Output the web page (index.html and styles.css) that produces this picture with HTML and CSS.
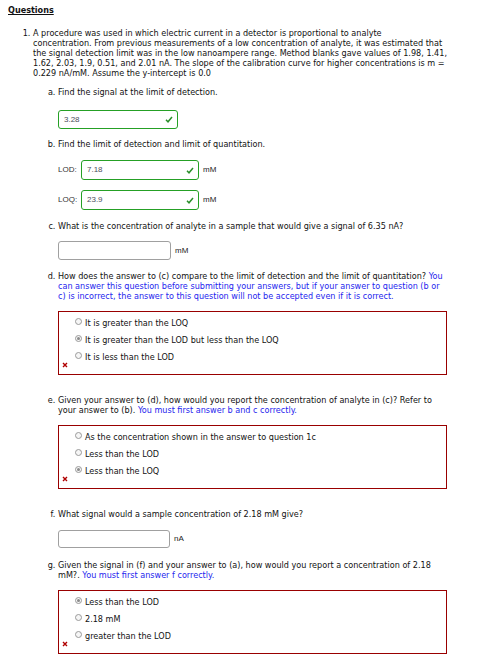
FILE: index.html
```html
<!DOCTYPE html>
<html>
<head>
<meta charset="utf-8">
<link rel="stylesheet" href="styles.css">
</head>
<body>
<div class="page">
  <h2 class="title">Questions</h2>
  <ol class="questions">
    <li>
      <p class="stem">A procedure was used in which electric current in a detector is proportional to analyte<br>concentration. From previous measurements of a low concentration of analyte, it was estimated that the signal detection limit was in the low nanoampere range. Method blanks gave values of 1.98, 1.41, 1.62, 2.03, 1.9, 0.51, and 2.01 nA. The slope of the calibration curve for higher concentrations is m = 0.229 nA/mM. Assume the y-intercept is 0.0</p>
      <ol class="parts">
        <li class="part">
          <p>Find the signal at the limit of detection.</p>
          <div class="answer answer-first">
            <span class="field ok w-a"><span class="val">3.28</span><svg class="check" width="8" height="7" viewBox="0 0 8 7"><path d="M1 3.8 L3 5.8 L7 1" fill="none" stroke="#2a8f2a" stroke-width="1.5"/></svg></span>
          </div>
        </li>
        <li class="part">
          <p>Find the limit of detection and limit of quantitation.</p>
          <div class="answer rows">
            <div class="row"><span class="label">LOD:</span><span class="field ok w-b"><span class="val">7.18</span><svg class="check" width="8" height="7" viewBox="0 0 8 7"><path d="M1 3.8 L3 5.8 L7 1" fill="none" stroke="#2a8f2a" stroke-width="1.5"/></svg></span><span class="unit">mM</span></div>
            <div class="row"><span class="label">LOQ:</span><span class="field ok w-b"><span class="val">23.9</span><svg class="check" width="8" height="7" viewBox="0 0 8 7"><path d="M1 3.8 L3 5.8 L7 1" fill="none" stroke="#2a8f2a" stroke-width="1.5"/></svg></span><span class="unit">mM</span></div>
          </div>
        </li>
        <li class="part">
          <p>What is the concentration of analyte in a sample that would give a signal of 6.35 nA?</p>
          <div class="answer row"><span class="field w-c"></span><span class="unit">mM</span></div>
        </li>
        <li class="part">
          <p>How does the answer to (c) compare to the limit of detection and the limit of quantitation? <span class="note">You can answer this question before submitting your answers, but if your answer to question (b or c) is incorrect, the answer to this question will not be accepted even if it is correct.</span></p>
          <div class="answer choices">
            <div class="opt"><span class="radio"></span>It is greater than the LOQ</div>
            <div class="opt"><span class="radio on"></span>It is greater than the LOD but less than the LOQ</div>
            <div class="opt"><span class="radio"></span>It is less than the LOD</div>
            <svg class="xmark" width="6" height="6" viewBox="0 0 6 6"><path d="M1 1 L5 5 M5 1 L1 5" stroke="#b00000" stroke-width="1.4"/></svg>
          </div>
        </li>
        <li class="part">
          <p>Given your answer to (d), how would you report the concentration of analyte in (c)? Refer to your answer to (b). <span class="note">You must first answer b and c correctly.</span></p>
          <div class="answer choices">
            <div class="opt"><span class="radio"></span>As the concentration shown in the answer to question 1c</div>
            <div class="opt"><span class="radio"></span>Less than the LOD</div>
            <div class="opt"><span class="radio on"></span>Less than the LOQ</div>
            <svg class="xmark" width="6" height="6" viewBox="0 0 6 6"><path d="M1 1 L5 5 M5 1 L1 5" stroke="#b00000" stroke-width="1.4"/></svg>
          </div>
        </li>
        <li class="part">
          <p>What signal would a sample concentration of 2.18 mM give?</p>
          <div class="answer answer-loose row"><span class="field w-c short"></span><span class="unit">nA</span></div>
        </li>
        <li class="part">
          <p>Given the signal in (f) and your answer to (a), how would you report a concentration of 2.18 mM?. <span class="note">You must first answer f correctly.</span></p>
          <div class="answer choices">
            <div class="opt"><span class="radio on"></span>Less than the LOD</div>
            <div class="opt"><span class="radio"></span>2.18 mM</div>
            <div class="opt"><span class="radio"></span>greater than the LOD</div>
            <svg class="xmark" width="6" height="6" viewBox="0 0 6 6"><path d="M1 1 L5 5 M5 1 L1 5" stroke="#b00000" stroke-width="1.4"/></svg>
          </div>
        </li>
      </ol>
    </li>
  </ol>
</div>
</body>
</html>
```

FILE: styles.css
```css
html, body {
  margin: 0;
  background: #fff;
}
body {
  font-family: "DejaVu Sans", Verdana, sans-serif;
  font-size: 8.1px;
  line-height: 10px;
  color: #111;
}
.page {
  padding: 5px 43px 0 8px;
}
.title {
  margin: 0;
  font-size: 8.1px;
  line-height: 10px;
  font-weight: bold;
  text-decoration: underline;
}
.questions {
  margin: 13px 0 0;
  padding-left: 25px;
}
.stem {
  margin: 0;
}
.parts {
  margin: 9px 0 0;
  padding-left: 25px;
  list-style: lower-alpha;
}
.part p {
  margin: 0;
}
.note {
  color: #2525ee;
}
.answer {
  margin: 10px 0 11px;
}
.answer-first {
  margin-top: 13px;
  margin-bottom: 10px;
}
.answer-loose {
  margin-top: 11px;
  margin-bottom: 12px;
}
.row {
  display: flex;
  align-items: center;
}
.rows {
  display: flex;
  flex-direction: column;
  gap: 10px;
  margin-top: 11px;
}
.field {
  display: inline-flex;
  align-items: center;
  justify-content: space-between;
  box-sizing: border-box;
  height: 19px;
  padding: 0 4px 0 5px;
  border: 1px solid #a0a0a0;
  border-radius: 3px;
  background: #fff;
  font-family: "Liberation Sans", Arial, sans-serif;
  font-size: 8px;
  color: #4a4f5c;
}
.field.ok {
  border-color: #25a025;
}
.w-a { width: 120px; }
.w-b { width: 118px; height: 20px; }
.w-c { width: 113px; }
.short { height: 18px; width: 112px; }
.label {
  width: 23px;
  color: #333;
  font-family: "Liberation Sans", Arial, sans-serif;
  font-size: 8px;
}
.unit {
  margin-left: 4px;
  font-family: "Liberation Sans", Arial, sans-serif;
  font-size: 8px;
  color: #222;
}
.check {
  display: block;
}
.choices {
  box-sizing: border-box;
  width: 389px;
  margin-top: 10px;
  margin-bottom: 20px;
  padding: 2px 0 6px 16px;
  border: 1px solid #990000;
}
.opt {
  display: flex;
  align-items: center;
  gap: 3px;
  height: 17px;
}
.radio {
  box-sizing: border-box;
  width: 7px;
  height: 7px;
  border: 1px solid #9a9a9a;
  border-radius: 50%;
  background: #f6f6f6;
  display: flex;
  align-items: center;
  justify-content: center;
  margin-top: -2px;
}
.radio.on::after {
  content: "";
  width: 3px;
  height: 3px;
  border-radius: 50%;
  background: #8a8a8a;
}
.xmark {
  display: block;
  margin: -3px 0 0 -13px;
}
```
